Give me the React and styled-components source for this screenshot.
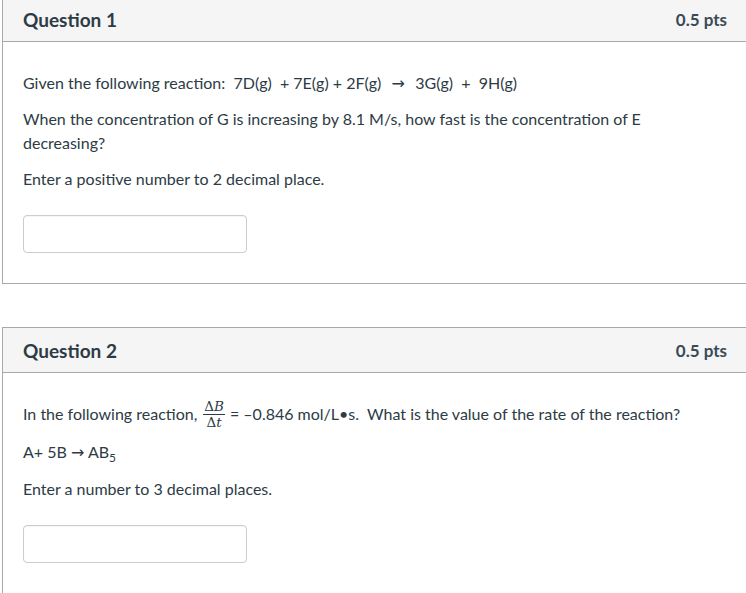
import React from 'react';
import styled, { createGlobalStyle } from 'styled-components';

const GlobalStyle = createGlobalStyle`
  html, body {
    margin: 0;
    padding: 0;
    background: #ffffff;
    overflow: hidden;
  }
  body {
    font-family: Lato, "Open Sans", "Liberation Sans", sans-serif;
    color: #2d3b45;
  }
`;

const Page = styled.div`
  margin-top: -4px;
  padding-left: 2px;
`;

const QuestionCard = styled.div`
  width: 744px;
  border: 1px solid #a9a9a9;
  background: #ffffff;
  margin-bottom: 43px;
`;

const Header = styled.div`
  display: flex;
  justify-content: space-between;
  align-items: center;
  height: 44px;
  padding: 0 20px 0 20px;
  background: #f5f5f5;
  border-bottom: 1px solid #a9a9a9;
`;

const Title = styled.h2`
  margin: 0;
  font-size: 19px;
  font-weight: 700;
  color: #2d3b45;
`;

const Points = styled.div`
  font-size: 17px;
  font-weight: 700;
  color: #3a4a56;
`;

const Body = styled.div`
  padding: 29px 20px 30px 20px;
`;

const Para = styled.p`
  margin: 0 0 ${(p) => p.$gap || 12}px 0;
  font-size: 16px;
  line-height: 24px;
  color: #2d3b45;
`;

const Arrow = styled.span`
  font-size: ${(p) => p.$size || 16}px;
  line-height: 0;
  font-family: "DejaVu Sans", sans-serif;
  padding: 0 ${(p) => p.$pad || 0}px;
`;

const Fraction = styled.span`
  display: inline-flex;
  flex-direction: column;
  align-items: center;
  vertical-align: middle;
  margin: -8px 5px -8px 6px;
  font-family: "DejaVu Serif", "Liberation Serif", serif;
  font-size: 13.5px;
  line-height: 13px;
  position: relative;
  top: -1px;
`;

const Numer = styled.span`
  padding: 0 1px 1px;
  border-bottom: 1px solid #2d3b45;
`;

const Denom = styled.span`
  padding: 1px 1px 0;
`;

const Ital = styled.i`
  font-style: italic;
`;

const Sub = styled.sub`
  font-size: 12px;
  line-height: 0;
`;

const AnswerInput = styled.input`
  display: block;
  box-sizing: border-box;
  width: 224px;
  height: 38px;
  margin-top: 24px;
  padding: 0 10px;
  border: 1px solid #c7cdd1;
  border-radius: 4px;
  box-shadow: inset 0 1px 1px rgba(0, 0, 0, 0.04);
  font-family: Lato, sans-serif;
  font-size: 16px;
  color: #2d3b45;
  outline: none;
`;

const App = () => {
  return (
    <>
      <GlobalStyle />
      <Page>
        <QuestionCard>
          <Header>
            <Title>Question 1</Title>
            <Points>0.5 pts</Points>
          </Header>
          <Body>
            <Para>
              Given the following reaction:&nbsp; 7D(g) &nbsp;+ 7E(g) + 2F(g) &nbsp;<Arrow $size={16} $pad={2}>→</Arrow>&nbsp; 3G(g) &nbsp;+ &nbsp;9H(g)
            </Para>
            <Para>
              When the concentration of G is increasing by 8.1 M/s, how fast is the concentration of E decreasing?
            </Para>
            <Para $gap={0}>Enter a positive number to 2 decimal place.</Para>
            <AnswerInput type="text" />
          </Body>
        </QuestionCard>

        <QuestionCard>
          <Header>
            <Title>Question 2</Title>
            <Points>0.5 pts</Points>
          </Header>
          <Body>
            <Para $gap={14}>
              In the following reaction,
              <Fraction>
                <Numer>Δ<Ital>B</Ital></Numer>
                <Denom>Δ<Ital>t</Ital></Denom>
              </Fraction>
              = –0.846 mol/L•s.&nbsp; What is the value of the rate of the reaction?
            </Para>
            <Para $gap={13}>
              A+ 5B <Arrow>→</Arrow> AB<Sub>5</Sub>
            </Para>
            <Para $gap={0}>Enter a number to 3 decimal places.</Para>
            <AnswerInput type="text" />
          </Body>
        </QuestionCard>
      </Page>
    </>
  );
};

export default App;
